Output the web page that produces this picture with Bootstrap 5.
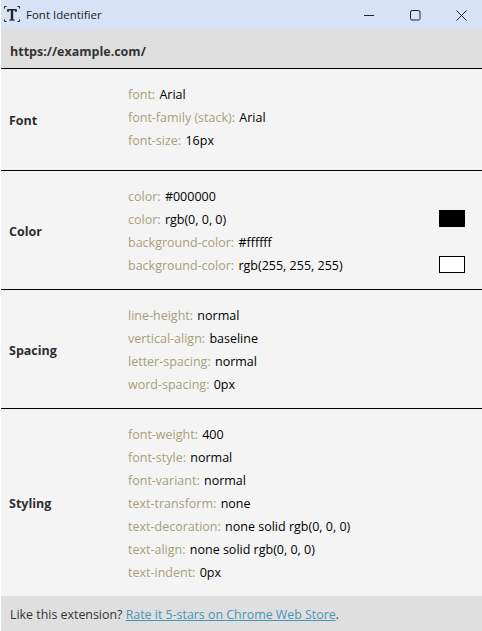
<!doctype html>
<html lang="en">
<head>
<meta charset="utf-8">
<title>Font Identifier</title>
<link href="https://cdn.jsdelivr.net/npm/bootstrap@5.3.0/dist/css/bootstrap.min.css" rel="stylesheet">
<style>
html,body{height:100%;overflow:hidden}
body{background:#f4f4f4;font-family:"Open Sans","Noto Sans",sans-serif;font-size:12.5px;color:#000;border-left:1px solid #fff}
.win-bar{height:29px;background:#d6e2f6;margin-left:-1px;margin-right:-2px;padding-top:1px;font-size:11.5px;color:#222}
.win-bar .app-ico{margin:-2px 5px 0 3px}
.win-btn{width:46px;height:29px}
.url-bar{background:#dfdfdf;border-bottom:1px solid #000;padding-left:10px;padding-top:8px;font-weight:700;font-size:12.5px;color:#333;margin-left:-1px;height:40px}
.sect{border-bottom:1px solid #000;padding:15px 0 11px 8px;background:#f4f4f4}
.sect-first{min-height:102px}
.sect-last{border-bottom:0;height:187px}
.sect-name{width:119px;font-weight:700;color:#2e2e2e}
.prop{height:23px;padding-right:17px}
.prop-k{color:#a6a07a;margin-right:4.3px}
.swatch{width:26px;height:17px;background:#000;border:1px solid #000;margin-bottom:4px}
.swatch-w{background:#fff}
.foot{height:35px;background:#dfdfdf;padding-left:10px;padding-top:3px;color:#333;margin-left:-1px;font-size:12.4px}
.foot a{color:#4a94b8}
</style>
</head>
<body>
<div class="d-flex flex-column vh-100">
  <div class="win-bar d-flex align-items-center">
    <svg class="app-ico" width="18" height="18" viewBox="0 0 18 18" fill="none" stroke="#222">
      <path d="M1.5 3.5V1.5H3.5M14.5 1.5H16.5V3.5M1.5 14.5V16.5H3.5M14.5 16.5H16.5V14.5" stroke-width="1"/>
      <path d="M5 7V4.8H13V7" stroke-width="1.6"/>
      <path d="M9 4.5V14.5" stroke-width="2.4"/>
      <path d="M6.5 15H11.5" stroke-width="1.4"/>
    </svg>
    <span class="flex-grow-1">Font Identifier</span>
    <div class="win-btn d-flex align-items-center justify-content-center"><svg width="11" height="11" viewBox="0 0 11 11"><path d="M0 5.5H10" stroke="#222"/></svg></div>
    <div class="win-btn d-flex align-items-center justify-content-center"><svg width="11" height="11" viewBox="0 0 11 11"><rect x=".5" y=".5" width="9.5" height="9.5" rx="1.5" fill="none" stroke="#222"/></svg></div>
    <div class="win-btn d-flex align-items-center justify-content-center"><svg width="11" height="11" viewBox="0 0 11 11"><path d="M.5.5L10.5 10.5M10.5.5L.5 10.5" stroke="#222"/></svg></div>
  </div>
  <div class="url-bar d-flex align-items-center">https://example.com/</div>

  <div class="sect sect-first d-flex align-items-center">
    <div class="sect-name">Font</div>
    <div class="flex-grow-1 align-self-start">
      <div class="prop d-flex align-items-center"><span class="prop-k">font:</span><span>Arial</span></div>
      <div class="prop d-flex align-items-center"><span class="prop-k">font-family (stack):</span><span>Arial</span></div>
      <div class="prop d-flex align-items-center"><span class="prop-k">font-size:</span><span>16px</span></div>
    </div>
  </div>

  <div class="sect d-flex align-items-center">
    <div class="sect-name">Color</div>
    <div class="flex-grow-1">
      <div class="prop d-flex align-items-center"><span class="prop-k">color:</span><span>#000000</span></div>
      <div class="prop d-flex align-items-center"><span class="prop-k">color:</span><span>rgb(0, 0, 0)</span><span class="swatch ms-auto"></span></div>
      <div class="prop d-flex align-items-center"><span class="prop-k">background-color:</span><span>#ffffff</span></div>
      <div class="prop d-flex align-items-center"><span class="prop-k">background-color:</span><span>rgb(255, 255, 255)</span><span class="swatch swatch-w ms-auto"></span></div>
    </div>
  </div>

  <div class="sect d-flex align-items-center">
    <div class="sect-name">Spacing</div>
    <div class="flex-grow-1">
      <div class="prop d-flex align-items-center"><span class="prop-k">line-height:</span><span>normal</span></div>
      <div class="prop d-flex align-items-center"><span class="prop-k">vertical-align:</span><span>baseline</span></div>
      <div class="prop d-flex align-items-center"><span class="prop-k">letter-spacing:</span><span>normal</span></div>
      <div class="prop d-flex align-items-center"><span class="prop-k">word-spacing:</span><span>0px</span></div>
    </div>
  </div>

  <div class="sect sect-last d-flex align-items-center">
    <div class="sect-name">Styling</div>
    <div class="flex-grow-1">
      <div class="prop d-flex align-items-center"><span class="prop-k">font-weight:</span><span>400</span></div>
      <div class="prop d-flex align-items-center"><span class="prop-k">font-style:</span><span>normal</span></div>
      <div class="prop d-flex align-items-center"><span class="prop-k">font-variant:</span><span>normal</span></div>
      <div class="prop d-flex align-items-center"><span class="prop-k">text-transform:</span><span>none</span></div>
      <div class="prop d-flex align-items-center"><span class="prop-k">text-decoration:</span><span>none solid rgb(0, 0, 0)</span></div>
      <div class="prop d-flex align-items-center"><span class="prop-k">text-align:</span><span>none solid rgb(0, 0, 0)</span></div>
      <div class="prop d-flex align-items-center"><span class="prop-k">text-indent:</span><span>0px</span></div>
    </div>
  </div>

  <div class="foot d-flex align-items-center"><span>Like this extension? <a href="#">Rate it 5-stars on Chrome Web Store</a>.</span></div>
</div>
<script src="https://cdn.jsdelivr.net/npm/bootstrap@5.3.0/dist/js/bootstrap.bundle.min.js"></script>
</body>
</html>
